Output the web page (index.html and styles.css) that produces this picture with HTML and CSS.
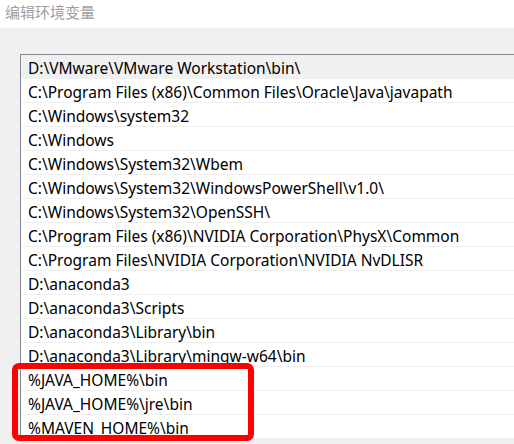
FILE: index.html
```html
<!DOCTYPE html>
<html lang="zh-CN">
<head>
  <meta charset="UTF-8" />
  <title>编辑环境变量</title>
  <link rel="stylesheet" href="styles.css">
</head>
<body>

  <!-- 标题栏 -->
  <div class="title-bar">编辑环境变量</div>

  <!-- Path 列表 -->
  <div class="dialog">
    <div class="path-list">
      <div class="row selected">D:\VMware\VMware Workstation\bin\</div>
      <div class="row">C:\Program Files (x86)\Common Files\Oracle\Java\javapath</div>
      <div class="row">C:\Windows\system32</div>
      <div class="row">C:\Windows</div>
      <div class="row">C:\Windows\System32\Wbem</div>
      <div class="row">C:\Windows\System32\WindowsPowerShell\v1.0\</div>
      <div class="row">C:\Windows\System32\OpenSSH\</div>
      <div class="row">C:\Program Files (x86)\NVIDIA Corporation\PhysX\Common</div>
      <div class="row">C:\Program Files\NVIDIA Corporation\NVIDIA NvDLISR</div>
      <div class="row">D:\anaconda3</div>
      <div class="row">D:\anaconda3\Scripts</div>
      <div class="row">D:\anaconda3\Library\bin</div>
      <div class="row">D:\anaconda3\Library\mingw-w64\bin</div>
      <div class="row">%JAVA_HOME%\bin</div>
      <div class="row">%JAVA_HOME%\jre\bin</div>
      <div class="row">%MAVEN_HOME%\bin</div>
    </div>
    <!-- 新加的三条 -->
    <div class="highlight"></div>
  </div>

</body>
</html>
```

FILE: styles.css
```css
html, body {
  margin: 0;
  padding: 0;
  height: 100%;
  overflow: hidden;
  font-family: "Noto Sans", "Noto Sans CJK SC", sans-serif;
  background: #f0f0f0;
}

.title-bar {
  height: 28px;
  background: white;
  color: #a0a0a0;
  font-size: 15px;
  line-height: 24px;
  padding-left: 5px;
  font-family: "Noto Sans CJK SC", sans-serif;
}

.dialog {
  position: relative;
  padding: 26px 0 0 20px;
}

.path-list {
  background: white;
  border-top: 1px solid #828790;
  border-left: 1px solid #828790;
}

.row {
  height: 22px;
  padding-top: 1px;
  line-height: 25px;
  border-bottom: 1px solid #f0f0f0;
  padding-left: 7px;
  font-size: 15.5px;
  color: #000;
  white-space: nowrap;
  overflow: hidden;
}

.row.selected {
  background: #f0f0f0;
  border-bottom-color: #f0f0f0;
}

.highlight {
  position: absolute;
  left: 12px;
  top: 335px;
  width: 230px;
  height: 66px;
  border: 6px solid #ff0000;
  border-radius: 7px;
}
```
